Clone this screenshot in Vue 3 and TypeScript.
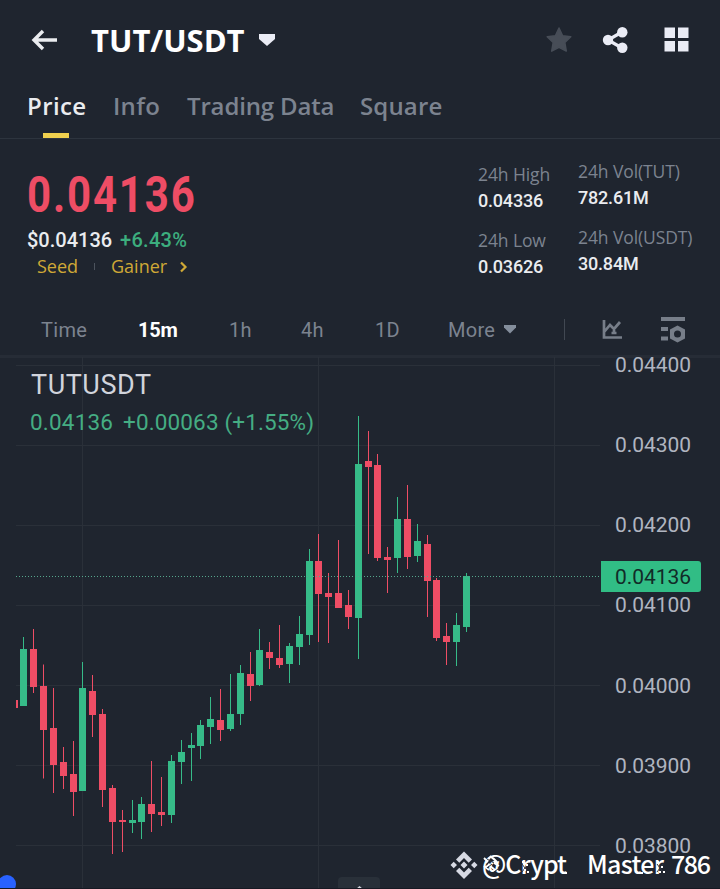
<script setup lang="ts">
interface Candle { x: number; high: number; top: number; bottom: number; low: number; up: boolean }
type Row = [number, number, number, number, number, 0 | 1]

const rows: Row[] = [
  [23.5, 637, 649, 706, 706, 1], [33.5, 629, 649, 687, 693, 0], [43.5, 664.5, 686, 730, 778.5, 0],
  [53.5, 688, 728, 765, 793, 0], [63.5, 747, 762, 776, 789, 0], [73.5, 741, 774, 792, 816, 0],
  [82.5, 662, 688, 791, 791, 1], [92.5, 675, 691, 715, 737, 0], [102.5, 709, 714, 790, 807, 0],
  [112.5, 785, 788, 822, 854, 0], [122.5, 810, 820, 822, 852, 0], [132.5, 800, 820, 823, 833, 1],
  [141.5, 797, 804, 822, 839, 1], [151.5, 761, 804, 814, 832, 0], [161.5, 777, 812, 815, 826, 0],
  [171.5, 755, 761, 815, 823, 1], [181.5, 740, 752, 762, 784, 1], [191.5, 733, 745, 748, 781, 1],
  [200.5, 720, 725, 746, 759, 1], [210.5, 697, 719, 727, 744, 1], [220.5, 689, 720, 730, 741, 0],
  [230.5, 674, 714, 729, 731, 1], [240.5, 665, 673, 714, 725, 1], [250.5, 652, 674, 686, 701, 0],
  [259.5, 629, 650, 685, 686, 1], [269.5, 642, 652, 658, 669, 0], [279.5, 625, 658, 665, 668, 0],
  [289.5, 643, 646, 664, 683, 1], [299.5, 616, 634, 647, 665, 1], [309.5, 549, 561, 635, 645, 1],
  [318.5, 534, 561, 594, 642, 0], [328.5, 573, 593, 597, 643, 0], [338.5, 540, 593, 608, 608, 0],
  [348.5, 590, 605, 617, 629, 0], [358.5, 416, 464, 618, 659, 1], [368.5, 431, 461, 467, 554, 0],
  [377.5, 454, 465, 558, 561, 0], [387.5, 547, 557, 560, 593, 0], [397.5, 497, 519, 558, 573, 1],
  [407.5, 485, 519, 557, 569, 0], [417.5, 524, 541, 556, 562, 1], [427.5, 535, 544, 581, 617, 0],
  [436.5, 578, 580, 638, 641, 0], [446.5, 623, 636, 642, 665, 0], [456.5, 613, 625, 642, 666, 1],
  [466.5, 573, 576, 627, 632, 1],
]
const candles: Candle[] = rows.map(([x, high, top, bottom, low, up]) => ({ x, high, top, bottom, low, up: up === 1 }))
const levels = [
  { label: '0.04400', y: 365.5, base: 372 }, { label: '0.04300', y: 445.5, base: 452 },
  { label: '0.04200', y: 525.5, base: 532 }, { label: '0.04100', y: 605.5, base: 612 },
  { label: '0.04000', y: 685.5, base: 693 }, { label: '0.03900', y: 765.5, base: 773 },
  { label: '0.03800', y: 845.5, base: 853 },
]
const columns = [82.5, 318.5, 554.5]
const stats = [
  [{ label: '24h High', value: '0.04336' }, { label: '24h Low', value: '0.03626' }],
  [{ label: '24h Vol(TUT)', value: '782.61M' }, { label: '24h Vol(USDT)', value: '30.84M' }],
]
</script>

<template>
  <main class="app">
    <header class="bar">
      <svg class="back" width="28" height="22" viewBox="0 0 28 22"><path d="M13 2 4 11l9 9M4 11h23" fill="none" stroke="#eaecef" stroke-width="3.4" /></svg>
      <h1>TUT/USDT</h1>
      <svg class="drop" width="18" height="14" viewBox="0 0 18 14"><path d="M1 1h16v5l-8 7-8-7z" fill="#eaecf5" /></svg>
      <svg class="star" width="28" height="28" viewBox="0 0 28 28"><path d="m14 2 3.600 7.700 8.200 1-6 5.800 1.500 8.600-7.300-3.800-7.300 3.800 1.500-8.600-6-5.800 8.200-1z" fill="#474d57" stroke="#474d57" stroke-width="1.500" stroke-linejoin="round" /></svg>
      <svg class="share" width="28" height="28" viewBox="0 0 28 28"><path d="M21 6 7 14l14 8" fill="none" stroke="#eaecf5" stroke-width="3.200" /><circle cx="7" cy="14" r="5.200" fill="#eaecf5" /><circle cx="21.300" cy="6.200" r="5.200" fill="#eaecf5" /><circle cx="21.300" cy="21.800" r="5.200" fill="#eaecf5" /></svg>
      <svg class="tiles" width="25" height="25" viewBox="0 0 25 25"><path d="M.5.5H11V11H.5zM14 .5h10.500V11H14zM.5 14H11v10.500H.5zM14 14h10.500v10.500H14z" fill="#eaecf5" /></svg>
    </header>
    <nav class="tabs">
      <span class="tab price-tab">Price</span><span class="tab info">Info</span><span class="tab trading">Trading Data</span><span class="tab square">Square</span>
    </nav>
    <section class="summary">
      <div class="quote">
        <div class="price">0.04136</div>
        <div class="fiat"><span class="usd">$0.04136</span><span class="gain">+6.43%</span></div>
        <div class="tags"><span class="seed">Seed</span><i /><span class="gainer">Gainer</span><svg width="9" height="12" viewBox="0 0 9 12"><path d="m2 1.500 4.500 4.500L2 10.500" fill="none" stroke="#d0a936" stroke-width="2.200" /></svg></div>
      </div>
      <div v-for="(col, c) in stats" :key="c" class="stats" :class="{ volumes: c === 1 }">
        <dl v-for="s in col" :key="s.label"><dt>{{ s.label }}</dt><dd>{{ s.value }}</dd></dl>
      </div>
    </section>
    <nav class="ranges">
      <span class="time">Time</span><b>15m</b><span class="hour">1h</span><span class="four">4h</span><span class="day">1D</span><span class="more">More</span>
      <svg class="caret" width="12" height="9" viewBox="0 0 12 9"><path d="M0 0h12v2.500L6 8.500 0 2.500z" fill="#848e9c" /></svg>
      <i class="split" />
      <svg class="plot-icon" width="20" height="20" viewBox="0 0 20 20"><path d="M2 0v17.500h18M2.500 11.500 8 5l4 4 6-7M9.500 13h5M12 10v3" fill="none" stroke="#777e89" stroke-width="2.700" /></svg>
      <svg class="settings" width="25" height="26" viewBox="0 0 25 26"><path d="M0 0h24v4H0zM0 10h7v4H0zM0 19.500h7v4H0z" fill="#777e89" /><path fill-rule="evenodd" d="m16.500 8.500 7.500 4v9l-7.500 4-7.500-4v-9zM16.500 13.500a3.500 3.500 0 1 0 0 7 3.500 3.500 0 0 0 0-7z" fill="#777e89" /></svg>
    </nav>
    <svg class="chart" width="720" height="531" viewBox="0 358 720 531">
      <g stroke="#2a3039">
        <line v-for="l in levels" :key="l.y" x1="16" x2="600" :y1="l.y" :y2="l.y" />
        <line v-for="x in columns" :key="x" :x1="x" :x2="x" y1="357" y2="889" />
      </g>
      <rect x="16" y="700" width="2" height="8" fill="#ee4d65" />
      <g v-for="c in candles" :key="c.x" :fill="c.up ? '#36bb88' : '#ee4d65'">
        <rect :x="c.x - 0.5" :y="c.high" width="1" :height="c.low - c.high" />
        <rect :x="c.x - 3.5" :y="c.top" width="7" :height="c.bottom - c.top" />
      </g>
      <line x1="16" x2="600" y1="576.5" y2="576.5" stroke="#55a68c" stroke-dasharray="1 2" />
      <text x="31" y="394" class="symbol" textLength="120">TUTUSDT</text>
      <text x="30" y="430" class="last" textLength="83">0.04136</text>
      <text x="123" y="430" class="last" textLength="191">+0.00063 (+1.55%)</text>
      <text v-for="l in levels" :key="l.label" x="615" :y="l.base" class="level" textLength="76">{{ l.label }}</text>
      <path d="M601 561h97q3 0 3 3v25q0 3-3 3h-97z" fill="#31bd85" />
      <text x="615" y="584" class="current" textLength="76">0.04136</text>
      <circle cx="7" cy="884" r="9" fill="#2962ff" />
      <rect x="338" y="877" width="42" height="18" rx="4" fill="#293039" />
      <path d="m356 890 3.500-3 3.500 3" fill="none" stroke="#d1d4dc" stroke-width="1.500" />
      <rect y="888" width="720" height="1" fill="#171923" />
      <g fill="#d7dae4">
        <path d="m464 851.500 8 8-3.300 3.200-4.700-4.700-4.700 4.700-3.300-3.200zM464 879l8-8-3.300-3.200-4.700 4.700-4.700-4.700-3.300 3.200zM464 861.500l3.500 3.500-3.500 3.500-3.500-3.500zM453.700 861.800l3.300 3.200-3.300 3.200-3.200-3.200zM474.300 861.800l3.200 3.200-3.200 3.200-3.300-3.200z" />
      </g>
      <text x="482" y="874" class="watermark" textLength="85">@Crypt</text>
      <text x="587" y="874" class="watermark" textLength="77">Master</text>
      <text x="671" y="874" class="watermark" textLength="40">786</text>
      <path d="m484 858 4 4m2-5-4 6m7-5 4 4m-9 2 7 6m-9-3 4-3m4-1 5 3M484 866l5 4m1-14 6 5" stroke="#fff" stroke-width="1.800" />
      <path d="m487 859 7 4m-7 5 5-4m2 8 4-3M522 864l6 8m0-8-6 8M657 864l6 8m0-8-6 8" stroke="#343944" stroke-width="1" />
      <path d="M522 861h2v2h-2zm4 3h2v2h-2zm-2 5h2v2h-2zm3 2h2v2h-2zM657 861h2v2h-2zm4 5h2v2h-2zm-2 5h2v2h-2zm4 0h2v2h-2zM563 872h4v2h-4zM639 872h4v2h-4z" fill="#fff" />
    </svg>
  </main>
</template>

<style>
body { margin: 0; background: #1f252f; }
</style>
<style scoped>
.app { width: 720px; height: 889px; overflow: hidden; background: #1f252f; color: #eaecef; font-family: Roboto, sans-serif; }
.bar { box-sizing: border-box; height: 79px; padding-left: 30px; display: flex; align-items: center; }
.back { margin-right: 33px; }
h1 { width: 154px; margin: 1px 13px 0 0; font: 700 31px/40px "Open Sans", sans-serif; white-space: nowrap; color: #fff; }
.star { margin: 1px 28px 0 269px; }
.share { margin-right: 35px; }
.tabs { box-sizing: border-box; height: 60px; padding-left: 27px; display: flex; border-bottom: 1px solid #2d343e; color: #7c838f; font: 600 24px/53px "Open Sans", sans-serif; }
.tab { white-space: nowrap; }
.price-tab { width: 59px; margin-right: 27px; color: #eaecef; letter-spacing: .4px; position: relative; }
.price-tab::after { content: ""; position: absolute; left: 16px; bottom: 0; width: 26px; height: 5px; background: #f0d04e; }
.info { width: 48px; margin-right: 26px; letter-spacing: .3px; }
.trading { width: 147px; margin-right: 26px; letter-spacing: -.15px; }
.square { letter-spacing: .15px; }
.summary { box-sizing: border-box; height: 162px; display: flex; padding: 22px 0 0 27px; }
.quote { width: 451px; padding-top: 3px; }
.price { height: 63px; font: 700 50px/62px Roboto, sans-serif; letter-spacing: 2.200px; color: #ee4d65; transform: scaleX(.84); transform-origin: left; }
.fiat { display: flex; height: 26px; font: 500 20px/26px Roboto, sans-serif; }
.usd { width: 93px; }
.gain { color: #3cae7e; letter-spacing: .3px; }
.tags { display: flex; align-items: center; height: 27px; padding-left: 10px; color: #d0a936; font: 400 18px/27px "Open Sans", sans-serif; }
.seed { width: 57px; }
.tags i { width: 1px; height: 7px; margin-right: 16px; background: #4c535d; }
.gainer { width: 68px; }
.stats { width: 100px; white-space: nowrap; }
.volumes { width: 120px; margin-top: -3px; }
dl { margin: 0; height: 66px; }
dt { color: #7c838f; font: 400 17.500px/26px "Open Sans", sans-serif; letter-spacing: -.1px; }
dd { margin: 0; font: 500 18px/27px Roboto, sans-serif; letter-spacing: -.2px; }
.ranges { box-sizing: border-box; height: 57px; padding: 3px 0 0 41px; display: flex; align-items: center; border-bottom: 3px solid #262c36; color: #7c838f; font-size: 20px; letter-spacing: .3px; }
.ranges b { width: 91px; color: #fff; font-weight: 700; letter-spacing: -.2px; }
.time { width: 97px; }
.hour { width: 72px; }
.four { width: 74px; }
.day { width: 73px; }
.more { width: 56px; }
.split { width: 1px; height: 21px; margin: 0 37px 0 48px; background: #414852; }
.settings { margin-left: 39px; }
.chart { display: block; overflow: visible; font-family: Roboto, sans-serif; }
.symbol { font-size: 27px; fill: #d1d4dc; }
.last { font-size: 22.500px; fill: #45ad83; }
.level { font-size: 21px; fill: #b0b5c0; }
.current { font-size: 21px; fill: #112b28; }
.watermark { font: 500 25px "Noto Sans CJK SC", sans-serif; fill: #fff; }
</style>
